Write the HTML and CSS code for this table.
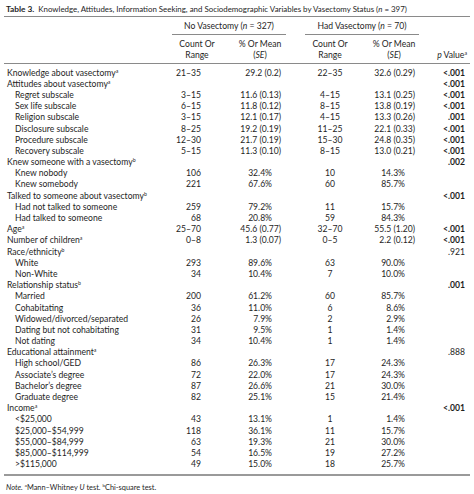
FILE: index.html
```html
<!DOCTYPE html>
<html>
<head>
<meta charset="utf-8">
<link rel="stylesheet" href="styles.css">
</head>
<body>
<div class="page">
  <div class="title"><b>Table 3.</b>&nbsp; Knowledge, Attitudes, Information Seeking, and Sociodemographic Variables by Vasectomy Status (<i>n</i> = 397)</div>
  <table class="tbl">
    <colgroup>
      <col class="c-label"><col class="c-nc"><col class="c-np"><col class="c-hc"><col class="c-hp"><col class="c-p">
    </colgroup>
    <thead>
      <tr class="grp">
        <th></th>
        <th colspan="2"><div class="gl gl-no">No Vasectomy (<i>n</i> = 327)</div></th>
        <th colspan="2"><div class="gl gl-had">Had Vasectomy (<i>n</i> = 70)</div></th>
        <th></th>
      </tr>
      <tr class="sub">
        <th></th>
        <th class="h-nc">Count Or<br>Range</th>
        <th class="h-np">% Or Mean<br>(<i>SE</i>)</th>
        <th class="h-hc">Count Or<br>Range</th>
        <th class="h-hp">% Or Mean<br>(<i>SE</i>)</th>
        <th class="h-p"><i>p</i> Value<sup>a</sup></th>
      </tr>
    </thead>
    <tbody>
      <tr class="first"><td class="lb">Knowledge about vasectomy<sup>a</sup></td><td class="nc">21–35</td><td class="np">29.2 (0.2)</td><td class="hc">22–35</td><td class="hp">32.6 (0.29)</td><td class="pv b">&lt;.001</td></tr>
      <tr><td class="lb">Attitudes about vasectomy<sup>a</sup></td><td></td><td></td><td></td><td></td><td class="pv b">&lt;.001</td></tr>
      <tr><td class="lb in">Regret subscale</td><td class="nc">3–15</td><td class="np">11.6 (0.13)</td><td class="hc">4–15</td><td class="hp">13.1 (0.25)</td><td class="pv b">&lt;.001</td></tr>
      <tr><td class="lb in">Sex life subscale</td><td class="nc">6–15</td><td class="np">11.8 (0.12)</td><td class="hc">8–15</td><td class="hp">13.8 (0.19)</td><td class="pv b">&lt;.001</td></tr>
      <tr><td class="lb in">Religion subscale</td><td class="nc">3–15</td><td class="np">12.1 (0.17)</td><td class="hc">4–15</td><td class="hp">13.3 (0.26)</td><td class="pv b">.001</td></tr>
      <tr><td class="lb in">Disclosure subscale</td><td class="nc">8–25</td><td class="np">19.2 (0.19)</td><td class="hc">11–25</td><td class="hp">22.1 (0.33)</td><td class="pv b">&lt;.001</td></tr>
      <tr><td class="lb in">Procedure subscale</td><td class="nc">12–30</td><td class="np">21.7 (0.19)</td><td class="hc">15–30</td><td class="hp">24.8 (0.35)</td><td class="pv b">&lt;.001</td></tr>
      <tr><td class="lb in">Recovery subscale</td><td class="nc">5–15</td><td class="np">11.3 (0.10)</td><td class="hc">8–15</td><td class="hp">13.0 (0.21)</td><td class="pv b">&lt;.001</td></tr>
      <tr><td class="lb">Knew someone with a vasectomy<sup>b</sup></td><td></td><td></td><td></td><td></td><td class="pv b">.002</td></tr>
      <tr><td class="lb in">Knew nobody</td><td class="nc">106</td><td class="np pct">32.4%</td><td class="hc">10</td><td class="hp pct">14.3%</td><td></td></tr>
      <tr><td class="lb in">Knew somebody</td><td class="nc">221</td><td class="np pct">67.6%</td><td class="hc">60</td><td class="hp pct">85.7%</td><td></td></tr>
      <tr><td class="lb">Talked to someone about vasectomy<sup>b</sup></td><td></td><td></td><td></td><td></td><td class="pv b">&lt;.001</td></tr>
      <tr><td class="lb in">Had not talked to someone</td><td class="nc">259</td><td class="np pct">79.2%</td><td class="hc">11</td><td class="hp pct">15.7%</td><td></td></tr>
      <tr><td class="lb in">Had talked to someone</td><td class="nc">68</td><td class="np pct">20.8%</td><td class="hc">59</td><td class="hp pct">84.3%</td><td></td></tr>
      <tr><td class="lb">Age<sup>a</sup></td><td class="nc">25–70</td><td class="np">45.6 (0.77)</td><td class="hc">32–70</td><td class="hp">55.5 (1.20)</td><td class="pv b">&lt;.001</td></tr>
      <tr><td class="lb">Number of children<sup>a</sup></td><td class="nc">0–8</td><td class="np">1.3 (0.07)</td><td class="hc">0–5</td><td class="hp">2.2 (0.12)</td><td class="pv b">&lt;.001</td></tr>
      <tr><td class="lb">Race/ethnicity<sup>b</sup></td><td></td><td></td><td></td><td></td><td class="pv">.921</td></tr>
      <tr><td class="lb in">White</td><td class="nc">293</td><td class="np pct">89.6%</td><td class="hc">63</td><td class="hp pct">90.0%</td><td></td></tr>
      <tr><td class="lb in">Non-White</td><td class="nc">34</td><td class="np pct">10.4%</td><td class="hc">7</td><td class="hp pct">10.0%</td><td></td></tr>
      <tr><td class="lb">Relationship status<sup>b</sup></td><td></td><td></td><td></td><td></td><td class="pv b">.001</td></tr>
      <tr><td class="lb in">Married</td><td class="nc">200</td><td class="np pct">61.2%</td><td class="hc">60</td><td class="hp pct">85.7%</td><td></td></tr>
      <tr><td class="lb in">Cohabitating</td><td class="nc">36</td><td class="np pct">11.0%</td><td class="hc">6</td><td class="hp pct">8.6%</td><td></td></tr>
      <tr><td class="lb in">Widowed/divorced/separated</td><td class="nc">26</td><td class="np pct">7.9%</td><td class="hc">2</td><td class="hp pct">2.9%</td><td></td></tr>
      <tr><td class="lb in">Dating but not cohabitating</td><td class="nc">31</td><td class="np pct">9.5%</td><td class="hc">1</td><td class="hp pct">1.4%</td><td></td></tr>
      <tr><td class="lb in">Not dating</td><td class="nc">34</td><td class="np pct">10.4%</td><td class="hc">1</td><td class="hp pct">1.4%</td><td></td></tr>
      <tr><td class="lb">Educational attainment<sup>a</sup></td><td></td><td></td><td></td><td></td><td class="pv">.888</td></tr>
      <tr><td class="lb in">High school/GED</td><td class="nc">86</td><td class="np pct">26.3%</td><td class="hc">17</td><td class="hp pct">24.3%</td><td></td></tr>
      <tr><td class="lb in">Associate’s degree</td><td class="nc">72</td><td class="np pct">22.0%</td><td class="hc">17</td><td class="hp pct">24.3%</td><td></td></tr>
      <tr><td class="lb in">Bachelor’s degree</td><td class="nc">87</td><td class="np pct">26.6%</td><td class="hc">21</td><td class="hp pct">30.0%</td><td></td></tr>
      <tr><td class="lb in">Graduate degree</td><td class="nc">82</td><td class="np pct">25.1%</td><td class="hc">15</td><td class="hp pct">21.4%</td><td></td></tr>
      <tr><td class="lb">Income<sup>a</sup></td><td></td><td></td><td></td><td></td><td class="pv b">&lt;.001</td></tr>
      <tr><td class="lb in">&lt;$25,000</td><td class="nc">43</td><td class="np pct">13.1%</td><td class="hc">1</td><td class="hp pct">1.4%</td><td></td></tr>
      <tr><td class="lb in">$25,000–$54,999</td><td class="nc">118</td><td class="np pct">36.1%</td><td class="hc">11</td><td class="hp pct">15.7%</td><td></td></tr>
      <tr><td class="lb in">$55,000–$84,999</td><td class="nc">63</td><td class="np pct">19.3%</td><td class="hc">21</td><td class="hp pct">30.0%</td><td></td></tr>
      <tr><td class="lb in">$85,000–$114,999</td><td class="nc">54</td><td class="np pct">16.5%</td><td class="hc">19</td><td class="hp pct">27.2%</td><td></td></tr>
      <tr class="last"><td class="lb in">&gt;$115,000</td><td class="nc">49</td><td class="np pct">15.0%</td><td class="hc">18</td><td class="hp pct">25.7%</td><td></td></tr>
    </tbody>
  </table>
  <div class="note"><i>Note.</i> <sup>a</sup>Mann–Whitney <i>U</i> test. <sup>b</sup>Chi-square test.</div>
</div>
</body>
</html>
```
FILE: styles.css
```css
html, body {
  margin: 0;
  padding: 0;
  background: #ffffff;
}
.page {
  width: 474px;
  padding: 3px 0 0 4px;
  box-sizing: border-box;
  font-family: "Lato", "Open Sans", sans-serif;
  font-size: 8.6px;
  color: #1e1e1e;
}
.title {
  font-size: 7.9px;
  line-height: 12px;
  height: 12px;
  padding-left: 2px;
  margin-bottom: 1px;
  white-space: nowrap;
}
.title b {
  font-weight: 700;
  font-size: 8.3px;
}
.tbl {
  width: 466px;
  border-collapse: collapse;
  table-layout: fixed;
  border-top: 1px solid #8a8a8a;
  border-bottom: 2px solid #9a9a9a;
}
.c-label { width: 164px; }
.c-nc { width: 56px; }
.c-np { width: 72px; }
.c-hc { width: 68px; }
.c-hp { width: 60px; }
.c-p { width: 46px; }
th, td {
  padding: 0;
  font-weight: normal;
  line-height: 11.18px;
  white-space: nowrap;
}
sup {
  font-size: 5.2px;
  line-height: 0;
  vertical-align: 3px;
}
.grp th {
  padding-top: 4px;
  text-align: center;
}
.gl {
  padding-bottom: 2px;
  border-bottom: 1px solid #8a8a8a;
}
.gl-no { margin: 0 10px 0 4px; }
.gl-had { margin: 0 5px 0 9px; }
.sub th {
  padding-top: 4px;
  padding-bottom: 1.5px;
  text-align: center;
  vertical-align: bottom;
  border-bottom: 1px solid #8a8a8a;
}
.sub .h-nc { padding-left: 2px; }
.sub .h-p {
  text-align: right;
  padding-right: 3px;
}
.first td { padding-top: 3.5px; }
.last td { padding-bottom: 3.5px; }
.lb { padding-left: 3px; }
.lb.in { padding-left: 11px; }
.nc {
  text-align: right;
  padding-right: 23px;
}
.np {
  text-align: right;
  padding-right: 15px;
}
.np.pct { padding-right: 24px; }
.hc { text-align: center; }
.hp {
  text-align: right;
  padding-right: 9px;
}
.hp.pct { padding-right: 19px; }
.pv {
  text-align: right;
  padding-right: 5px;
}
.pv.b { font-weight: 700; }
.note {
  margin-top: 7px;
  padding-left: 2px;
  font-size: 7.4px;
  line-height: 10px;
}
.note sup {
  font-size: 4.5px;
}
```
